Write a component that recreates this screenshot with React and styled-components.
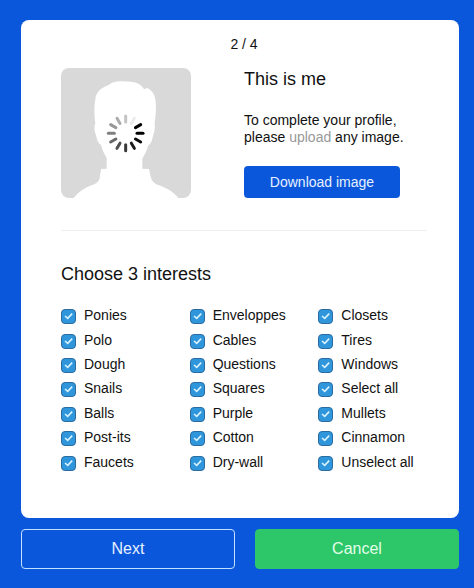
import React from "react";
import styled, { createGlobalStyle } from "styled-components";

const GlobalStyle = createGlobalStyle`
  * { box-sizing: border-box; }
  body {
    margin: 0;
    background: #0b57db;
    color: #111;
    font-family: "Liberation Sans", Arial, sans-serif;
    font-size: 14px;
  }
`;

const Page = styled.main`
  display: flex;
  flex-direction: column;
  min-height: 100vh;
  padding: 20px 15px 19px 21px;
  gap: 11px;
`;

const Card = styled.section`
  flex: 1;
  padding: 16px 32px 40px 40px;
  border-radius: 8px;
  background: #fff;
`;

const Step = styled.p`
  margin: 0 0 16px;
  line-height: 16px;
  text-align: center;
`;

const Profile = styled.div`
  display: grid;
  grid-template-columns: 1fr 1fr;
  padding-bottom: 32px;
  border-bottom: 1px solid #efefef;
`;

const Photo = styled.svg`
  display: block;
  width: 130px;
  height: 130px;
  border-radius: 8px;
`;

const Details = styled.div`
  display: flex;
  flex-direction: column;
  align-items: flex-start;
`;

const Title = styled.h2`
  margin: 0;
  font-size: 18px;
  font-weight: 400;
  line-height: 22px;
`;

const Hint = styled.p`
  margin: 22px 0 20px;
  line-height: 17px;
  white-space: nowrap;
`;

const UploadLink = styled.a`
  color: #999;
  text-decoration: none;
`;

const DownloadButton = styled.button`
  width: 156px;
  height: 32px;
  padding: 0;
  border: 0;
  border-radius: 4px;
  background: #0b57db;
  color: #e6f1ff;
  font: inherit;
`;

const Interests = styled.fieldset`
  margin: 0;
  padding: 32px 0 0;
  border: 0;
  min-width: 0;
`;

const InterestGrid = styled.div`
  display: grid;
  grid-template-columns: repeat(3, 1fr);
  grid-template-rows: repeat(7, 1fr);
  grid-auto-flow: column;
  column-gap: 20px;
  min-height: 171px;
  margin-top: 18px;
`;

const Option = styled.label`
  display: flex;
  align-items: center;
  gap: 8px;
  line-height: 20px;
  white-space: nowrap;
`;

const CheckSlot = styled.span`
  display: grid;
  margin-top: 3px;

  > * { grid-area: 1 / 1; }
`;

const CheckInput = styled.input`
  appearance: none;
  width: 15px;
  height: 15px;
  margin: 0;
  border: 1px solid #2a6c9f;
  border-radius: 4px;
  background: #fff;

  &:checked { background: #3096dc; }
  &:not(:checked) + svg { visibility: hidden; }
`;

const CheckMark = styled.svg`
  width: 15px;
  height: 15px;
  pointer-events: none;
`;

const Actions = styled.div`
  display: grid;
  grid-template-columns: 214fr 204fr;
  gap: 20px;
`;

const ActionButton = styled.button`
  height: 40px;
  padding: 0;
  border: 1px solid ${(p) => (p.$filled ? "#2dc668" : "#c4e0ff")};
  border-radius: 4px;
  background: ${(p) => (p.$filled ? "#2dc668" : "transparent")};
  color: ${(p) => (p.$filled ? "#e2ffe9" : "#e6f1ff")};
  font: inherit;
  font-size: 16px;
`;

const spokes = [
  "#000", "#0c0c0c", "#1c1c1c", "#383838", "#505050", "#686868",
  "#808080", "#989898", "#acacac", "#c4c4c4", "#ececec", "#000",
];

const interests = [
  "Ponies", "Polo", "Dough", "Snails", "Balls", "Post-its", "Faucets",
  "Enveloppes", "Cables", "Questions", "Squares", "Purple", "Cotton", "Dry-wall",
  "Closets", "Tires", "Windows", "Select all", "Mullets", "Cinnamon", "Unselect all",
];

function Avatar() {
  return (
    <Photo viewBox="34 24 390 390" role="img" aria-label="Profile photo loading">
      <rect x="34" y="24" width="390" height="390" fill="#d9d9d9" />
      <path
        fill="#fff"
        d="M72 414C88 394 106 382 130 374C146 368 150 360 151 348L154 327L171 326L171 293C164 282 158 270 154 254C146 252 142 240 139 226C134 214 132 200 137 190C133 166 133 140 137 118C139 98 152 84 176 76C186 66 200 63 218 64C240 65 262 66 272 75C277 79 280 83 284 88C290 83 296 84 302 90C312 98 316 108 318 124C320 148 318 170 315 190C317 206 313 220 309 232C306 246 302 254 296 256C292 272 284 286 278 296L278 326L298 327L303 350C306 362 312 370 328 376C350 384 370 394 386 414Z"
      />
      {spokes.map((color, i) => (
        <line
          key={i}
          x1="262" y1="220" x2="280" y2="220"
          stroke={color}
          strokeWidth="9"
          strokeLinecap="round"
          transform={`rotate(${i * 30} 228 220)`}
        />
      ))}
    </Photo>
  );
}

function Interest({ name }) {
  return (
    <Option>
      <CheckSlot>
        <CheckInput type="checkbox" defaultChecked />
        <CheckMark viewBox="0 0 15 15" aria-hidden="true">
          <path d="M4 7L6.7 9.3L11.2 4.6" fill="none" stroke="#d8f3ff" strokeWidth="1.6" />
        </CheckMark>
      </CheckSlot>
      {name}
    </Option>
  );
}

export default function App() {
  return (
    <>
      <GlobalStyle />
      <Page>
        <Card>
          <Step>2 / 4</Step>
          <Profile>
            <Avatar />
            <Details>
              <Title>This is me</Title>
              <Hint>
                To complete your profile,
                <br />
                please <UploadLink href="#upload">upload</UploadLink> any image.
              </Hint>
              <DownloadButton type="button">Download image</DownloadButton>
            </Details>
          </Profile>
          <Interests aria-labelledby="interests-title">
            <Title id="interests-title">Choose 3 interests</Title>
            <InterestGrid>
              {interests.map((name) => (
                <Interest key={name} name={name} />
              ))}
            </InterestGrid>
          </Interests>
        </Card>
        <Actions>
          <ActionButton type="button">Next</ActionButton>
          <ActionButton type="button" $filled>Cancel</ActionButton>
        </Actions>
      </Page>
    </>
  );
}
